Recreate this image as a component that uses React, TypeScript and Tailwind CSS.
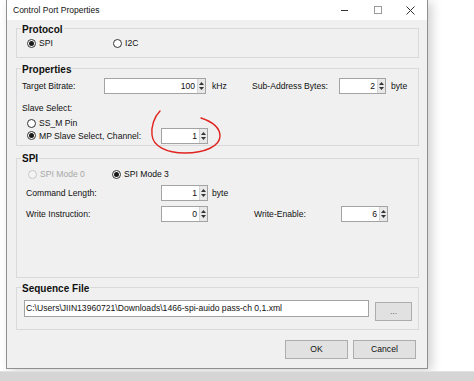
import React from 'react';

const Radio = ({ checked, disabled }: { checked?: boolean; disabled?: boolean }) => (
  <span
    className={`w-[9px] h-[9px] rounded-full border flex items-center justify-center shrink-0 ${
      disabled ? 'border-[#c8c8c8] bg-[#f4f4f4]' : 'border-[#333333] bg-white'
    }`}
  >
    {checked && <span className="w-[5px] h-[5px] rounded-full bg-[#1a1a1a]" />}
  </span>
);

const SpinBox = ({ value, width }: { value: string; width: string }) => (
  <div className={`flex h-[16px] border border-[#a3a3a3] bg-white ${width}`}>
    <span className="flex-1 text-right pr-[2px] leading-[14px]">{value}</span>
    <div className="w-[8px] flex flex-col items-center justify-center gap-[2px] bg-[#e8e8e8] border-l border-[#d4d4d4]">
      <svg width="5" height="3" viewBox="0 0 5 3">
        <polygon points="2.5,0 5,3 0,3" fill="#333" />
      </svg>
      <svg width="5" height="3" viewBox="0 0 5 3">
        <polygon points="0,0 5,0 2.5,3" fill="#333" />
      </svg>
    </div>
  </div>
);

const GroupLabel = ({ children, mt }: { children: React.ReactNode; mt: string }) => (
  <div className={`ml-[4px] px-[1px] w-fit bg-[#f0f0f0] font-bold text-[10px] leading-[12px] ${mt}`}>
    {children}
  </div>
);

export default function App() {
  return (
    <div className="relative w-[474px] h-[381px] bg-white flex flex-col overflow-hidden text-[8.6px] text-[#111] font-['Liberation_Sans',Arial,sans-serif]">
      <div className="ml-[6px] w-[422px] h-[369px] border-l border-r border-b border-[#8f8f8f] bg-[#f0f0f0] flex flex-col shadow-[4px_2px_10px_rgba(0,0,0,0.18)]">
        {/* Title bar */}
        <div className="h-[20px] bg-white flex items-center shrink-0">
          <span className="flex-1 pl-[6px] text-[8.5px] leading-[20px]">Control Port Properties</span>
          <div className="w-[33px] h-[20px] flex items-center justify-center">
            <span className="w-[7px] h-px bg-[#333]" />
          </div>
          <div className="w-[33px] h-[20px] flex items-center justify-center">
            <span className="w-[8px] h-[8px] border border-[#9a9a9a]" />
          </div>
          <div className="w-[33px] h-[20px] flex items-center justify-center">
            <svg width="9" height="9" viewBox="0 0 9 9">
              <path d="M0.5 0.5 L8.5 8.5 M8.5 0.5 L0.5 8.5" stroke="#333" strokeWidth="1" />
            </svg>
          </div>
        </div>

        <div className="pl-[9px] pr-[8px] flex flex-col">
          {/* Protocol */}
          <div className="mt-[8px] h-[30px] border border-[#d9d9d9] flex flex-col">
            <GroupLabel mt="-mt-[5px]">Protocol</GroupLabel>
            <div className="mt-[1px] h-[12px] flex items-center pl-[10px]">
              <div className="w-[86px] flex items-center gap-[3px]">
                <Radio checked />
                <span>SPI</span>
              </div>
              <div className="flex items-center gap-[3px]">
                <Radio />
                <span>I2C</span>
              </div>
            </div>
          </div>

          {/* Properties */}
          <div className="mt-[10px] h-[78px] border border-[#d9d9d9] flex flex-col">
            <GroupLabel mt="-mt-[5px]">Properties</GroupLabel>
            <div className="mt-[2px] h-[16px] flex items-center pl-[5px]">
              <span className="w-[82px]">Target Bitrate:</span>
              <SpinBox value="100" width="w-[102px]" />
              <span className="ml-[6px] w-[40px]">kHz</span>
              <span className="w-[87px]">Sub-Address Bytes:</span>
              <SpinBox value="2" width="w-[47px]" />
              <span className="ml-[5px]">byte</span>
            </div>
            <div className="mt-[8px] h-[12px] flex items-center pl-[5px]">Slave Select:</div>
            <div className="mt-[4px] h-[10px] flex items-center pl-[10px] gap-[3px]">
              <Radio />
              <span>SS_M Pin</span>
            </div>
            <div className="h-[15px] flex items-center pl-[10px]">
              <div className="w-[134px] flex items-center gap-[3px] pt-[1px]">
                <Radio checked />
                <span>MP Slave Select, Channel:</span>
              </div>
              <SpinBox value="1" width="w-[47px]" />
            </div>
          </div>

          {/* SPI */}
          <div className="mt-[12px] h-[120px] border border-[#d9d9d9] flex flex-col">
            <GroupLabel mt="-mt-[6px]">SPI</GroupLabel>
            <div className="mt-[3px] h-[12px] flex items-center pl-[11px]">
              <div className="w-[84px] flex items-center gap-[3px] text-[#a8a8a8]">
                <Radio disabled />
                <span>SPI Mode 0</span>
              </div>
              <div className="flex items-center gap-[3px]">
                <Radio checked />
                <span>SPI Mode 3</span>
              </div>
            </div>
            <div className="mt-[5px] h-[16px] flex items-center pl-[9px]">
              <span className="w-[135px]">Command Length:</span>
              <SpinBox value="1" width="w-[47px]" />
              <span className="ml-[4px]">byte</span>
            </div>
            <div className="mt-[5px] h-[16px] flex items-center pl-[9px]">
              <span className="w-[135px]">Write Instruction:</span>
              <SpinBox value="0" width="w-[47px]" />
              <span className="ml-[46px] w-[87px]">Write-Enable:</span>
              <SpinBox value="6" width="w-[47px]" />
            </div>
          </div>

          {/* Sequence File */}
          <div className="mt-[9px] h-[43px] border border-[#d9d9d9] flex flex-col">
            <GroupLabel mt="-mt-[5px]">Sequence File</GroupLabel>
            <div className="mt-[5px] flex items-start pl-[7px]">
              <div className="w-[345px] h-[17px] border border-[#a3a3a3] bg-white pl-[1px] leading-[15px] whitespace-nowrap overflow-hidden">
                {"C:\\Users\\JIIN13960721\\Downloads\\1466-spi-auido pass-ch 0,1.xml"}
              </div>
              <div className="ml-[6px] mt-[2px] w-[37px] h-[19px] border border-[#adadad] bg-[#e1e1e1] flex items-center justify-center text-[#666] leading-none">
                ...
              </div>
            </div>
          </div>

          {/* Buttons */}
          <div className="mt-[10px] flex justify-end gap-[5px] mr-[3px]">
            <div className="w-[63px] h-[19px] border border-[#adadad] bg-[#e1e1e1] flex items-center justify-center">OK</div>
            <div className="w-[63px] h-[19px] border border-[#adadad] bg-[#e1e1e1] flex items-center justify-center">Cancel</div>
          </div>
        </div>
      </div>
      <div className="mt-[2px] h-[10px] w-full bg-[#d5d5d5] border-t border-[#e2e2e2]" />

      {/* red hand-drawn annotation */}
      <svg className="absolute left-0 top-0 pointer-events-none" width="474" height="381" viewBox="0 0 474 381">
        <path
          d="M160 111 C154 117 151 127 152 135 C153 146 166 153 185 153 C205 153 220 146 220 136 C220 128 213 122 201 118"
          fill="none"
          stroke="#e0231f"
          strokeWidth="1.4"
          strokeLinecap="round"
        />
      </svg>
    </div>
  );
}
